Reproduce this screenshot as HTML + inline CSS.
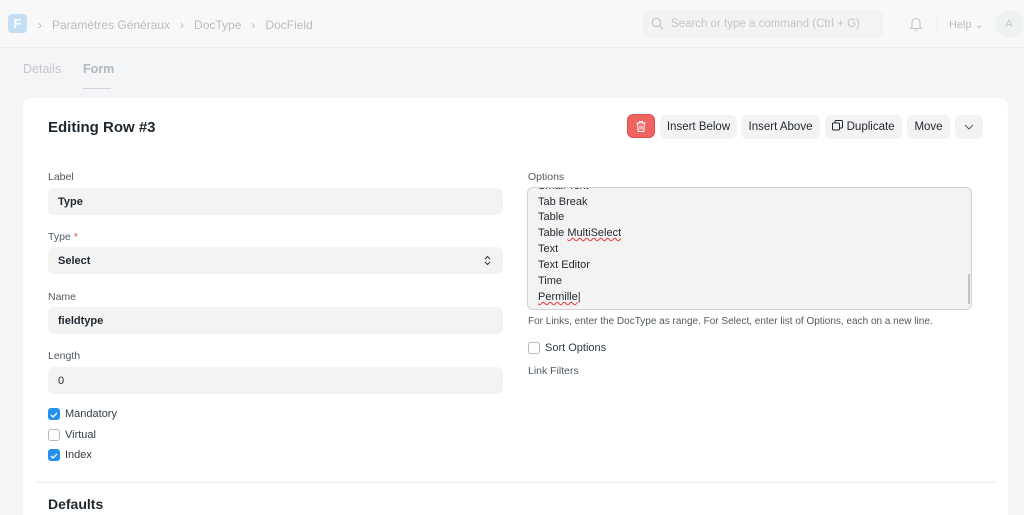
<!DOCTYPE html>
<html><head><style>
*{box-sizing:border-box;margin:0;padding:0}
html,body{width:1024px;height:515px;overflow:hidden}
body{background:#f4f5f6;font-family:"Liberation Sans",sans-serif;color:#1f272e;position:relative}
.a{position:absolute}
.top{left:0;top:0;width:1024px;height:48px;background:#f8f8f9;border-bottom:1px solid #eeeff0}
.crumb{color:#b9bcc0;font-size:12px;top:17px}
.card{left:23px;top:98px;width:985px;height:430px;background:#fff;border-radius:8px 8px 0 0}
.btn{top:114px;height:24px;background:#f3f3f4;border-radius:6px;font-size:11.5px;line-height:24px;text-align:center;color:#1f272e}
.lbl{font-size:10.5px;color:#525a61}
.inp{left:48px;width:455px;height:27px;background:#f3f3f4;border-radius:6px;font-size:11px;font-weight:bold;line-height:27px;padding-left:10px;color:#1f272e}
.cb{left:48px;width:12px;height:12px;border-radius:3px}
.on{background:#2490ef}
.off{border:1px solid #b5b9be;background:#fff}
.cbl{left:65px;font-size:11px;color:#333c44}
.opt{left:10px;font-size:11px;color:#1f272e}
</style></head><body>
<div class="a top"></div>
<div class="a" style="left:8px;top:14px;width:19px;height:19px;background:#c4def6;border-radius:4px;color:#fff;font-weight:bold;font-size:13px;text-align:center;line-height:19px">F</div>
<div class="a crumb" style="left:38px;top:18px">›&nbsp;&nbsp; Paramètres Généraux &nbsp;&nbsp;›&nbsp;&nbsp; DocType &nbsp;&nbsp;›&nbsp;&nbsp; DocField</div>
<div class="a" style="left:643px;top:10px;width:240px;height:28px;background:#f3f3f4;border-radius:6px"></div>
<svg class="a" style="left:651px;top:17px" width="13" height="13" viewBox="0 0 13 13"><circle cx="5.5" cy="5.5" r="4.2" fill="none" stroke="#c3c6ca" stroke-width="1.2"/><path d="M8.6 8.6L12 12" stroke="#c3c6ca" stroke-width="1.2"/></svg>
<div class="a crumb" style="left:671px;font-size:11.5px;top:18px;color:#c3c6ca">Search or type a command (Ctrl + G)</div>
<svg class="a" style="left:909px;top:16px" width="14" height="16" viewBox="0 0 14 16"><path d="M3 11V6.5a4 4 0 018 0V11l1.5 1.5h-11z M5.5 14h3" fill="none" stroke="#c3c6ca" stroke-width="1.1"/></svg>
<div class="a" style="left:937px;top:14px;width:1px;height:20px;background:#eceded"></div>
<div class="a crumb" style="left:949px;top:18px;font-size:11px">Help ⌄</div>
<div class="a" style="left:995px;top:10px;width:28px;height:28px;border-radius:50%;background:#eef3ef;color:#b9cfc0;font-size:11px;text-align:center;line-height:28px">A</div>
<div class="a" style="left:23px;top:62px;font-size:12.5px;color:#c6c8cb">Details</div>
<div class="a" style="left:83px;top:62px;font-size:12.5px;color:#b5b8bc;font-weight:bold">Form</div>
<div class="a" style="left:83px;top:88px;width:28px;height:1px;background:#d4d6d9"></div>
<div class="a card"></div>
<div class="a" style="left:48px;top:119px;font-size:15px;font-weight:bold;color:#1f272e">Editing Row #3</div>
<div class="a btn" style="left:627px;width:28px;background:#ef6461;border:1px solid #e44f4c"><svg width="12" height="13" viewBox="0 0 12 13" style="margin-top:5px"><path d="M1.5 3h9M4.5 3V1.5h3V3M2.5 3l.7 8.5h5.6L9.5 3M5 5.5v4M7 5.5v4" fill="none" stroke="#fff" stroke-width="1"/></svg></div>
<div class="a btn" style="left:660px;width:77px;top:115px">Insert Below</div>
<div class="a btn" style="left:741px;width:79px;top:115px">Insert Above</div>
<div class="a btn" style="left:825px;width:77px;top:115px"><svg width="11" height="11" viewBox="0 0 11 11" style="vertical-align:-1px"><rect x="0.5" y="3" width="7" height="7" rx="1" fill="none" stroke="#1f272e"/><path d="M3 3V1.5a1 1 0 011-1h5.5a1 1 0 011 1V7a1 1 0 01-1 1H7.5" fill="none" stroke="#1f272e"/></svg> Duplicate</div>
<div class="a btn" style="left:907px;width:43px;top:115px">Move</div>
<div class="a btn" style="left:955px;width:28px;top:115px"><svg width="10" height="6" viewBox="0 0 10 6"><path d="M1 1l4 4 4-4" fill="none" stroke="#525a61"/></svg></div>

<div class="a lbl" style="left:48px;top:171px">Label</div>
<div class="a inp" style="top:188px;line-height:28px">Type</div>
<div class="a lbl" style="left:48px;top:231px">Type <span style="color:#e24c4c">*</span></div>
<div class="a inp" style="top:247px;line-height:29px">Select<svg style="position:absolute;right:12px;top:8px" width="7" height="11" viewBox="0 0 7 11"><path d="M1 4l2.5-2.5L6 4M1 7l2.5 2.5L6 7" fill="none" stroke="#333" stroke-width="1"/></svg></div>
<div class="a lbl" style="left:48px;top:291px">Name</div>
<div class="a inp" style="top:307px;line-height:29px">fieldtype</div>
<div class="a lbl" style="left:48px;top:350px">Length</div>
<div class="a inp" style="top:367px;font-weight:normal;line-height:29px">0</div>
<div class="a cb on" style="top:408px"><svg width="12" height="12" viewBox="0 0 12 12"><path d="M3 6l2 2 4-4" fill="none" stroke="#fff" stroke-width="1.3"/></svg></div>
<div class="a cbl" style="top:408px">Mandatory</div>
<div class="a cb off" style="top:429px"></div>
<div class="a cbl" style="top:429px">Virtual</div>
<div class="a cb on" style="top:449px"><svg width="12" height="12" viewBox="0 0 12 12"><path d="M3 6l2 2 4-4" fill="none" stroke="#fff" stroke-width="1.3"/></svg></div>
<div class="a cbl" style="top:449px">Index</div>
<div class="a" style="left:36px;top:482px;width:960px;height:1px;background:#eceded"></div>
<div class="a" style="left:48px;top:496px;font-size:14px;font-weight:bold">Defaults</div>

<div class="a lbl" style="left:528px;top:171px">Options</div>
<div class="a" style="left:527px;top:187px;width:445px;height:123px;background:#f3f3f4;border:1px solid #cfd2d6;border-radius:6px;overflow:hidden">
<div class="a" style="left:440px;top:86px;width:2px;height:30px;background:#bfc2c6"></div>
<div class="a opt" style="top:-8px">Small Text</div>
<div class="a opt" style="top:8px">Tab Break</div>
<div class="a opt" style="top:23px">Table</div>
<div class="a opt" style="top:39px">Table <span style="text-decoration:underline wavy #e33;text-decoration-thickness:1px">MultiSelect</span></div>
<div class="a opt" style="top:55px">Text</div>
<div class="a opt" style="top:71px">Text Editor</div>
<div class="a opt" style="top:87px">Time</div>
<div class="a opt" style="top:103px"><span style="text-decoration:underline wavy #e33;text-decoration-thickness:1px">Permille</span>|</div>
</div>
<div class="a" style="left:528px;top:316px;font-size:10px;color:#525a61">For Links, enter the DocType as range. For Select, enter list of Options, each on a new line.</div>
<div class="a cb off" style="left:528px;top:342px"></div>
<div class="a cbl" style="left:545px;top:342px">Sort Options</div>
<div class="a lbl" style="left:528px;top:365px">Link Filters</div>
</body></html>
